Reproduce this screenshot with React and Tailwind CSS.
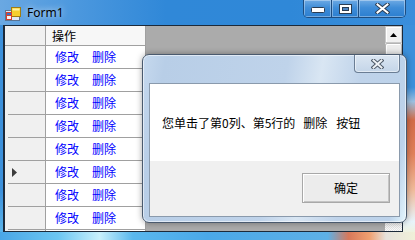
const ROWS = 9
const SELECTED = 5

function WinIcon() {
  return (
    <svg width="16" height="14" viewBox="0 0 16 14">
      <rect x="0.5" y="3.5" width="14" height="10" fill="#dfe8f2" stroke="#5a7494" />
      <rect x="6.5" y="0.5" width="9" height="9" fill="#f5cf2e" stroke="#a07c10" />
      <rect x="7.5" y="1.5" width="7" height="2" fill="#fff2a0" />
      <rect x="1" y="5" width="6" height="8" fill="#d8402c" />
      <rect x="2" y="6" width="4" height="2" fill="#3c6cc4" />
      <rect x="2" y="9" width="4" height="3" fill="#f6f6f6" />
    </svg>
  )
}

function CaptionButtons() {
  const btn = 'flex justify-center bg-[linear-gradient(180deg,#6eaae4,#3f8dd8_45%,#2c7fd0)] shadow-[inset_0_0_0_1px_rgba(255,255,255,0.35)]'
  return (
    <div className="flex h-[18px] self-start ml-auto mr-[9px] rounded-b-[5px] border border-t-0 border-[#1d4c80] overflow-hidden">
      <div className={`${btn} w-[28px] items-end pb-[4px] border-r border-[#1d4c80]`}>
        <svg width="14" height="6" viewBox="0 0 14 6">
          <rect x="0.5" y="0.5" width="13" height="5" rx="1" fill="#fff" stroke="#2a3c52" />
        </svg>
      </div>
      <div className={`${btn} w-[27px] items-center border-r border-[#1d4c80]`}>
        <svg width="13" height="10" viewBox="0 0 13 10">
          <rect x="0.5" y="0.5" width="12" height="9" fill="#fff" stroke="#2a3c52" />
          <rect x="3.5" y="3.5" width="6" height="3" fill="#4f86c2" stroke="#2a3c52" />
        </svg>
      </div>
      <div className={`${btn} w-[46px] items-center`}>
        <svg width="15" height="11" viewBox="0 0 15 11">
          <path d="M2.5 1.5 L12.5 9.5 M12.5 1.5 L2.5 9.5" stroke="#2a3c52" strokeWidth="4" strokeLinecap="square" />
          <path d="M2.5 1.5 L12.5 9.5 M12.5 1.5 L2.5 9.5" stroke="#fff" strokeWidth="2" strokeLinecap="square" />
        </svg>
      </div>
    </div>
  )
}

function GridRow({ selected, empty }) {
  return (
    <div className="flex h-[23px] shrink-0">
      <div className="w-[41px] bg-[#f0f0f0] border-r border-[#a0a0a0] pl-[3px] flex">
        <div className="flex-1 border-b border-[#a0a0a0] flex items-center pl-[4px]">
          {selected && (
            <svg width="5" height="9" viewBox="0 0 5 9">
              <path d="M0 0 L5 4.5 L0 9 Z" fill="#3c3c3c" />
            </svg>
          )}
        </div>
      </div>
      <div className="w-[100px] bg-white border-r border-b border-[#a0a0a0] flex items-center pl-[9px] gap-[13px] text-[#0000ff]">
        {!empty && <span>修改</span>}
        {!empty && <span>删除</span>}
      </div>
    </div>
  )
}

function Scrollbar() {
  return (
    <div className="w-[17px] flex flex-col bg-[repeating-conic-gradient(#e4e4e4_0_25%,#fafafa_0_50%)] bg-[length:2px_2px]">
      <div className="h-[17px] shrink-0 bg-[#f0f0f0] border border-[#c8c8c8] shadow-[inset_1px_1px_0_#fff] flex items-center justify-center">
        <svg width="7" height="4" viewBox="0 0 7 4">
          <path d="M0 4 L3.5 0 L7 4 Z" fill="#000" />
        </svg>
      </div>
      <div className="h-[110px] shrink-0 bg-[#ececec] border border-[#b4b4b4] rounded-[2px] shadow-[inset_1px_1px_0_#fff]" />
    </div>
  )
}

function MessageBox() {
  return (
    <div className="absolute left-[142px] top-[54px] w-[265px] h-[169px] rounded-[7px] border border-[#4a5a6e] bg-[linear-gradient(100deg,#c6d9ee_0%,#b8cee7_8%,#bfd3ea_50%,#d9e6f3_62%,#bfd3ea_76%,#bcd2ea_94%,#e4f6fd_100%)] shadow-[inset_0_0_0_1px_rgba(255,255,255,0.55),0_0_6px_rgba(0,0,0,0.35)] pt-[28px] px-[6px] pb-[5px] flex flex-col">
      <div className="absolute left-[211px] top-0 w-[46px] h-[18px] rounded-b-[4px] border border-t-0 border-[#6a7d94] bg-[linear-gradient(180deg,#dbe6f2,#c4d5e8)] shadow-[inset_0_0_0_1px_rgba(255,255,255,0.5)] flex items-center justify-center">
        <svg width="13" height="10" viewBox="0 0 13 10">
          <path d="M2.5 1.5 L10.5 8.5 M10.5 1.5 L2.5 8.5" stroke="#4e5a68" strokeWidth="4" strokeLinecap="square" />
          <path d="M2.5 1.5 L10.5 8.5 M10.5 1.5 L2.5 8.5" stroke="#eef2f6" strokeWidth="2" strokeLinecap="square" />
        </svg>
      </div>
      <div className="flex-1 flex flex-col border border-[#8a9aac]">
        <div className="h-[77px] shrink-0 bg-white flex items-center pl-[12px] text-[12px] text-black">
          <span>您单击了第0列、第5行的</span>
          <span className="ml-[8px]">删除</span>
          <span className="ml-[9px]">按钮</span>
        </div>
        <div className="flex-1 bg-[#f0f0f0] flex justify-end items-start pt-[12px] pr-[9px]">
          <div className="w-[88px] h-[30px] bg-[#ececec] border border-[#a8a8a8] shadow-[inset_1px_1px_0_#fff,inset_-1px_-1px_0_#c4c4c4] flex items-center justify-center text-[12px] text-black">
            确定
          </div>
        </div>
      </div>
    </div>
  )
}

export default function App() {
  return (
    <div className="relative w-[415px] h-[240px] overflow-hidden font-['Noto_Sans_CJK_SC','Noto_Sans',sans-serif] text-[12px] leading-none">
      <div className="flex flex-col w-full h-full bg-[#3c90db]">
        <div className="h-[25px] shrink-0 flex items-center bg-[linear-gradient(90deg,#6aa8e2_0%,#4c98de_18%,#3088d8_40%,#2f88d8_70%,#3a8edb_100%)]">
          <div className="ml-[5px] mt-[2px] flex">
            <WinIcon />
          </div>
          <span className="ml-[6px] mt-[1px] font-['Noto_Sans',sans-serif] text-[12px] text-black [text-shadow:0_0_6px_rgba(255,255,255,0.9)]">
            Form1
          </span>
          <CaptionButtons />
        </div>
        <div className="flex flex-1 min-h-0">
          <div className="w-[3px] bg-[linear-gradient(180deg,#3c90db_0%,#3c90db_80%,#5cb4ea_100%)]" />
          <div className="w-[400px] flex border-t border-r border-b border-l-2 border-[#1c2a3a] overflow-hidden">
            <div className="w-[141px] flex flex-col overflow-hidden">
              <div className="flex h-[20px] shrink-0">
                <div className="w-[41px] bg-[#f0f0f0] border-r border-b border-[#a0a0a0]" />
                <div className="w-[100px] bg-[#f7f7f7] border-r border-b border-[#a0a0a0] flex items-center pl-[6px] text-black">
                  操作
                </div>
              </div>
              {Array.from({ length: ROWS }).map((_, i) => (
                <GridRow key={i} selected={i === SELECTED} empty={i === ROWS - 1} />
              ))}
            </div>
            <div className="flex-1 bg-[#ababab]" />
            <Scrollbar />
          </div>
          <div className="flex-1 bg-[linear-gradient(180deg,#3c90db_0%,#3c90db_30%,#9cc0e0_37%,#d26c48_46%,#e0805a_62%,#f0bc9c_80%,#e8f4fb_95%,#eef2e0_100%)]" />
        </div>
        <div className="h-[8px] shrink-0 bg-[linear-gradient(90deg,#4aa6e6_0%,#6cc6f2_14%,#c8f0fc_24%,#5ab8ee_32%,#4aa8e8_50%,#5eb0e6_79%,#d8785a_84%,#f0a070_89%,#e6e2dc_93%,#f0f0d8_100%)]" />
      </div>
      <MessageBox />
    </div>
  )
}
